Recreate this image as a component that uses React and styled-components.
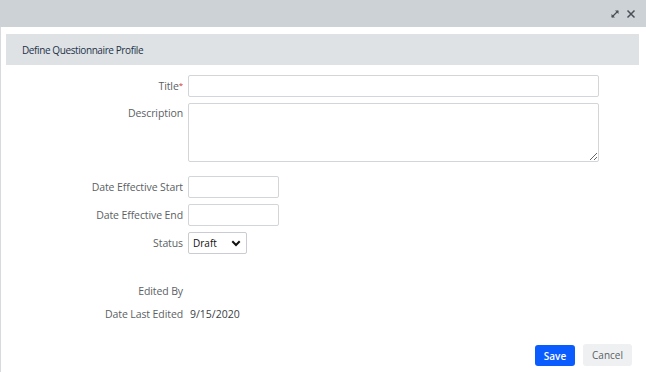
import React from 'react';
import styled, { createGlobalStyle } from 'styled-components';

const Global = createGlobalStyle`
  html, body {
    margin: 0;
    background: #ffffff;
    font-family: "Open Sans", "Noto Sans", sans-serif;
  }
`;

const Window = styled.div`
  width: 646px;
  height: 372px;
  display: flex;
  flex-direction: column;
  overflow: hidden;
`;

const TitleBar = styled.div`
  height: 27px;
  background: #cdd2d6;
  display: flex;
  align-items: center;
  justify-content: flex-end;
  gap: 4px;
  padding-right: 9px;
`;

const BarButton = styled.button`
  border: none;
  background: transparent;
  padding: 0;
  width: 12px;
  height: 12px;
  display: flex;
  align-items: center;
  justify-content: center;
  cursor: pointer;
  color: #4a4f56;
`;

const Body = styled.div`
  flex: 1;
  border-left: 1px solid #d8dbde;
  display: flex;
  flex-direction: column;
  padding: 7px 7px 0 5px;
`;

const Header = styled.div`
  height: 31px;
  background: #dfe2e5;
  display: flex;
  align-items: center;
  padding-left: 16px;
  font-size: 10px;
  color: #24324a;
  letter-spacing: -0.4px;
`;

const Form = styled.div`
  display: flex;
  flex-direction: column;
  gap: 6px;
  margin-top: 10px;
`;

const Row = styled.div`
  display: flex;
  align-items: ${p => (p.$top ? 'flex-start' : 'center')};
  gap: 5px;
  margin-top: ${p => p.$gap || 0}px;
  min-height: ${p => p.$h || 22}px;
`;

const Label = styled.div`
  width: 177px;
  flex: none;
  text-align: right;
  font-size: 10.5px;
  color: #5b5f64;
  letter-spacing: -0.1px;
  padding-top: ${p => (p.$top ? 3 : 0)}px;
`;

const Required = styled.span`
  color: #d0312d;
  font-size: 8px;
  vertical-align: top;
`;

const Input = styled.input`
  box-sizing: border-box;
  width: ${p => p.$w}px;
  height: 22px;
  border: 1px solid #d3d6d9;
  border-radius: 2px;
  margin: 0;
  padding: 0 4px;
  font-family: inherit;
  font-size: 10px;
`;

const TextArea = styled.textarea`
  box-sizing: border-box;
  width: 411px;
  height: 59px;
  border: 1px solid #d3d6d9;
  border-radius: 2px;
  margin: 0;
  padding: 3px 4px;
  font-family: inherit;
  font-size: 10px;
  resize: vertical;
`;

const Select = styled.div`
  box-sizing: border-box;
  width: 59px;
  height: 22px;
  border: 1px solid #c9ccd0;
  border-radius: 2px;
  display: flex;
  align-items: center;
  justify-content: space-between;
  padding: 0 5px 0 4px;
  font-size: 10px;
  color: #111;
`;

const Value = styled.div`
  font-size: 10.5px;
  color: #3c4045;
  padding-left: 2px;
`;

const Footer = styled.div`
  margin-top: auto;
  height: 28px;
  display: flex;
  align-items: flex-start;
  justify-content: flex-end;
  gap: 8px;
  padding-right: 7px;
`;

const Button = styled.button`
  box-sizing: border-box;
  border: none;
  border-radius: 3px;
  font-family: inherit;
  font-size: 10px;
  cursor: pointer;
  background: ${p => (p.$primary ? '#0b5cff' : '#eef0f2')};
  color: ${p => (p.$primary ? '#ffffff' : '#5b5f64')};
  font-weight: ${p => (p.$primary ? 600 : 400)};
  width: ${p => (p.$primary ? 40 : 49)}px;
  height: ${p => (p.$primary ? 21 : 22)}px;
  margin-top: ${p => (p.$primary ? 1 : 0)}px;
  padding: 0;
`;

const ExpandIcon = () => (
  <svg width="10" height="10" viewBox="0 0 10 10">
    <path d="M2 8 L8 2" stroke="#4a4f56" strokeWidth="1.3" />
    <path d="M5 1.5 H8.5 V5 Z" fill="#4a4f56" />
    <path d="M1.5 5 V8.5 H5 Z" fill="#4a4f56" />
  </svg>
);

const CloseIcon = () => (
  <svg width="10" height="10" viewBox="0 0 10 10">
    <path d="M1.5 1.5 L8.5 8.5 M8.5 1.5 L1.5 8.5" stroke="#4a4f56" strokeWidth="1.5" />
  </svg>
);

const Chevron = () => (
  <svg width="10" height="7" viewBox="0 0 10 7">
    <path d="M1.3 1.3 L5 5 L8.7 1.3" stroke="#111" strokeWidth="2" fill="none" />
  </svg>
);

const App = () => {
  return (
    <Window>
      <Global />
      <TitleBar>
        <BarButton><ExpandIcon /></BarButton>
        <BarButton><CloseIcon /></BarButton>
      </TitleBar>
      <Body>
        <Header>Define Questionnaire Profile</Header>
        <Form>
          <Row>
            <Label>Title<Required>*</Required></Label>
            <Input $w={411} />
          </Row>
          <Row $top>
            <Label $top>Description</Label>
            <TextArea />
          </Row>
          <Row $gap={8}>
            <Label>Date Effective Start</Label>
            <Input $w={91} />
          </Row>
          <Row>
            <Label>Date Effective End</Label>
            <Input $w={91} />
          </Row>
          <Row>
            <Label>Status</Label>
            <Select>
              <span>Draft</span>
              <Chevron />
            </Select>
          </Row>
          <Row $gap={22} $h={17}>
            <Label>Edited By</Label>
          </Row>
          <Row $h={17}>
            <Label>Date Last Edited</Label>
            <Value>9/15/2020</Value>
          </Row>
        </Form>
        <Footer>
          <Button $primary>Save</Button>
          <Button>Cancel</Button>
        </Footer>
      </Body>
    </Window>
  );
};

export default App;
